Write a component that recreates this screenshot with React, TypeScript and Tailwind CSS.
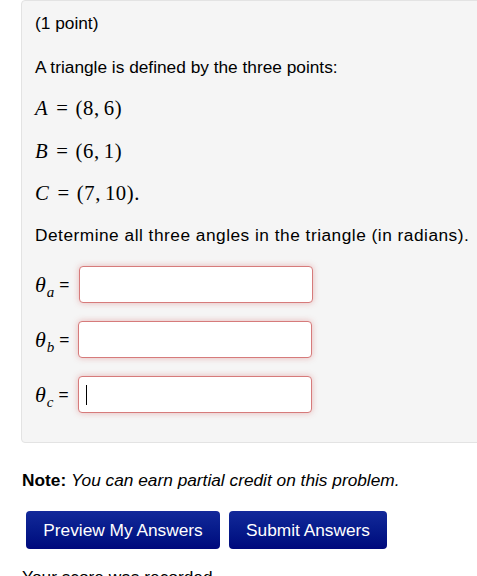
import React from "react";

const sans = { fontFamily: '"Liberation Sans", Arial, sans-serif' };
const serif = { fontFamily: '"Liberation Serif", "Times New Roman", serif' };

function MathLine({ v, a, b, dot }: { v: string; a: string; b: string; dot?: boolean }) {
  return (
    <div className="text-[20.7px] leading-[24px] text-black tracking-[0.6px]" style={serif}>
      <i className="mr-[1px]">{v}</i>
      <span className="mx-[7px]">=</span>
      <span>(</span>
      <span>{a}</span>
      <span className="mr-[4px]">,</span>
      <span>{b}</span>
      <span>)</span>
      {dot ? <span>.</span> : null}
    </div>
  );
}

function AnswerRow({ sub, cursor, shift }: { sub: string; cursor?: boolean; shift?: boolean }) {
  return (
    <div className="flex items-center h-[37px]">
      <span className="flex items-baseline text-black" style={serif}>
        <i className="text-[22px] leading-[24px]">θ</i>
        <i className="text-[15px] leading-[15px] relative top-[5px] ml-[1px]">{sub}</i>
      </span>
      <span className="text-[17.3px] ml-[5px] text-black" style={sans}>=</span>
      <div
        className={`${shift ? "ml-[10px]" : "ml-[9px]"} w-[234px] h-[37px] bg-white border border-[#d67b7b] rounded-[4px] shadow-[0_0_6px_rgba(210,70,70,0.35)] flex items-center pl-[7px]`}
      >
        {cursor ? <span className="block w-[1px] h-[20px] bg-black" /> : null}
      </div>
    </div>
  );
}

export default function App() {
  return (
    <div className="w-[477px] h-[576px] overflow-hidden bg-white" style={sans}>
      <div className="pl-[21px]">
        <div className="w-[480px] border border-[#e3e3e3] rounded-[4px] bg-[#f5f5f5] pt-[12px] pb-[29px] pl-[13px] text-black">
          <p className="text-[17.3px] leading-[20px]">(1 point)</p>
          <p className="text-[17.3px] leading-[20px] mt-[24px]">A triangle is defined by the three points:</p>
          <div className="mt-[19px]">
            <MathLine v="A" a="8" b="6" />
          </div>
          <div className="mt-[19px]">
            <MathLine v="B" a="6" b="1" />
          </div>
          <div className="mt-[18px]">
            <MathLine v="C" a="7" b="10" dot />
          </div>
          <p className="text-[17.3px] leading-[20px] mt-[20px] tracking-[0.5px] whitespace-nowrap">
            Determine all three angles in the triangle (in radians).
          </p>
          <div className="mt-[21px] flex flex-col gap-[18px]">
            <AnswerRow sub="a" shift />
            <AnswerRow sub="b" />
            <AnswerRow sub="c" cursor />
          </div>
        </div>
      </div>
      <div className="pl-[22px]">
        <p className="mt-[27px] text-[17.3px] leading-[20px] text-black">
          <b>Note:</b> <i>You can earn partial credit on this problem.</i>
        </p>
        <div className="mt-[21px] ml-[4px] flex gap-[9px]">
          <button className="h-[38px] w-[194px] rounded-[4px] bg-gradient-to-b from-[#13299a] to-[#00087c] text-white text-[17.3px] leading-[20px]">
            Preview My Answers
          </button>
          <button className="h-[38px] w-[158px] rounded-[4px] bg-gradient-to-b from-[#13299a] to-[#00087c] text-white text-[17.3px] leading-[20px]">
            Submit Answers
          </button>
        </div>
        <p className="mt-[18px] text-[17.3px] leading-[20px] text-black">Your score was recorded.</p>
      </div>
    </div>
  );
}
